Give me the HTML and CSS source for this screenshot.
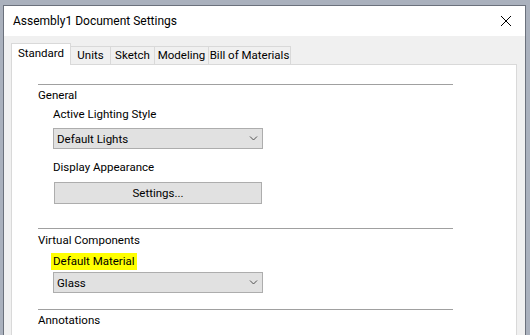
FILE: index.html
```html
<!DOCTYPE html>
<html>
<head>
<meta charset="utf-8">
<link rel="stylesheet" href="styles.css">
</head>
<body>
<div class="window">
  <div class="titlebar">
    <span class="title">Assembly1 Document Settings</span>
    <svg class="close" width="12" height="12" viewBox="0 0 12 12"><path d="M1 1 L11 11 M11 1 L1 11" stroke="#000" stroke-width="1" fill="none"/></svg>
  </div>
  <div class="client">
    <div class="tabs">
      <div class="tab active w-standard">Standard</div>
      <div class="tab w-units">Units</div>
      <div class="tab w-sketch">Sketch</div>
      <div class="tab w-modeling">Modeling</div>
      <div class="tab w-bom">Bill of Materials</div>
    </div>
    <div class="panel">
      <div class="sep first"></div>
      <div class="group">General</div>
      <div class="item">
        <div class="label">Active Lighting Style</div>
        <div class="combo lights"><span>Default Lights</span><svg class="chev" width="9" height="5" viewBox="0 0 9 5"><path d="M1 0.5 L4.5 4 L8 0.5" stroke="#505050" stroke-width="1" fill="none"/></svg></div>
        <div class="label disp">Display Appearance</div>
        <div class="button">Settings...</div>
      </div>
      <div class="sep second"></div>
      <div class="group later">Virtual Components</div>
      <div class="item">
        <div class="label hl">Default Material</div>
        <div class="combo glass"><span>Glass</span><svg class="chev" width="9" height="5" viewBox="0 0 9 5"><path d="M1 0.5 L4.5 4 L8 0.5" stroke="#505050" stroke-width="1" fill="none"/></svg></div>
      </div>
      <div class="sep third"></div>
      <div class="group last">Annotations</div>
    </div>
  </div>
</div>
</body>
</html>
```
FILE: styles.css
```css
html, body {
  margin: 0;
  padding: 0;
  width: 530px;
  height: 335px;
  overflow: hidden;
  background: #aab1bd;
  font-family: "Segoe UI", Roboto, sans-serif;
  font-size: 11.5px;
  color: #000;
}
.window {
  margin: 5px 0 0 3px;
  width: 521px;
  height: 340px;
  border: 1px solid #6b717c;
  border-bottom: none;
  background: #f0f0f0;
  display: flex;
  flex-direction: column;
}
.titlebar {
  height: 30px;
  background: #fff;
  display: flex;
  align-items: center;
  justify-content: space-between;
  padding: 0 9px 0 9px;
}
.title {
  font-size: 12px;
  margin-top: -1px;
}
.close {
  margin-right: 4px;
}
.client {
  padding: 8px 8px 0 7px;
}
.tabs {
  display: flex;
  align-items: flex-end;
  height: 20px;
  position: relative;
  z-index: 1;
}
.tab {
  height: 17px;
  line-height: 17px;
  border: 1px solid #d9d9d9;
  border-bottom: none;
  border-left: none;
  background: #f0f0f0;
  text-align: center;
  white-space: nowrap;
  box-sizing: content-box;
}
.tab.active {
  height: 21px;
  line-height: 18px;
  background: #fff;
  border-left: 1px solid #d9d9d9;
  margin-bottom: -1px;
}
.w-standard { width: 58px; }
.w-units { width: 39px; }
.w-sketch { width: 43px; }
.w-modeling { width: 53px; }
.w-bom { width: 81px; }
.panel {
  background: #fff;
  border: 1px solid #d9d9d9;
  border-bottom: none;
  height: 280px;
  padding-left: 26px;
}
.sep {
  width: 415px;
  height: 1px;
  background: #a0a0a0;
}
.sep.first { margin-top: 19px; }
.sep.second { margin-top: 24px; }
.sep.third { margin-top: 16px; }
.group {
  line-height: 15px;
  margin-top: 3px;
}
.group.later { margin-top: 4px; }
.group.last { margin-top: 3px; }
.item {
  padding-left: 15px;
}
.label {
  line-height: 15px;
  margin-top: 4px;
}
.label.disp { margin-top: 11px; }
.label.hl {
  display: inline-block;
  background: #ffff00;
  line-height: 17px;
  padding: 0 2px;
  margin-left: -2px;
  margin-top: 5px;
}
.combo {
  height: 19px;
  border: 1px solid #adadad;
  background: #e1e1e1;
  display: flex;
  align-items: center;
  justify-content: space-between;
  padding: 0 4px 0 3px;
  box-sizing: content-box;
  width: 201px;
}
.combo.lights { margin-top: 6px; }
.combo.glass { margin-top: 2px; }
.button {
  margin-left: 1px;
  margin-top: 7px;
  width: 206px;
  height: 20px;
  border: 1px solid #adadad;
  background: #e1e1e1;
  text-align: center;
  line-height: 20px;
}
```
